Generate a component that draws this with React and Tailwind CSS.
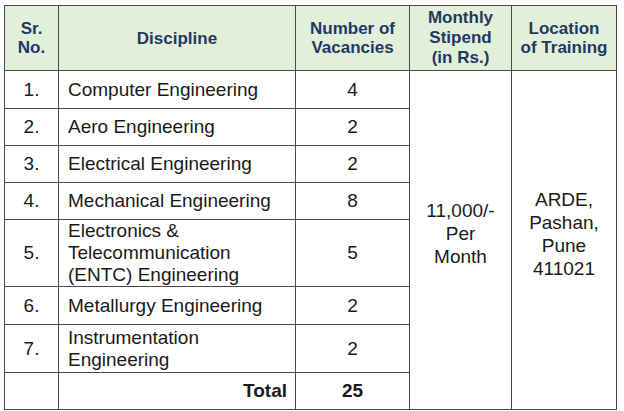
import React from "react";

const rows = [
  { sr: "1.", name: "Computer Engineering", n: "4", h: "h-[38px]" },
  { sr: "2.", name: "Aero Engineering", n: "2", h: "h-[37px]" },
  { sr: "3.", name: "Electrical Engineering", n: "2", h: "h-[37px]" },
  { sr: "4.", name: "Mechanical Engineering", n: "8", h: "h-[37px]" },
  { sr: "5.", name: "Electronics & Telecommunication (ENTC) Engineering", n: "5", h: "h-[66px]" },
  { sr: "6.", name: "Metallurgy Engineering", n: "2", h: "h-[38px]" },
  { sr: "7.", name: "Instrumentation Engineering", n: "2", h: "h-[48px]" },
];

const cell = "border border-[#4a4a4a] p-0";

const App = () => {
  return (
    <div className="w-[624px] h-[411px] bg-white pt-[5px] pl-[4px] font-['Liberation_Sans',Arial,sans-serif]">
      <table className="table-fixed border-collapse w-[612px] text-[19px] leading-[22px] text-[#1a1a1a]">
        <colgroup>
          <col className="w-[54px]" />
          <col className="w-[237px]" />
          <col className="w-[114px]" />
          <col className="w-[102px]" />
          <col className="w-[105px]" />
        </colgroup>
        <thead>
          <tr className="h-[65px] bg-[#e2efd9] text-[#1f3864] font-bold text-[17px] leading-[19px]">
            <th className={cell + " text-center"}>
              Sr.
              <br />
              No.
            </th>
            <th className={cell + " text-center"}>Discipline</th>
            <th className={cell + " text-center"}>
              Number of
              <br />
              Vacancies
            </th>
            <th className={cell + " text-center leading-[20px]"}>
              Monthly
              <br />
              Stipend
              <br />
              (in Rs.)
            </th>
            <th className={cell + " text-center"}>
              Location
              <br />
              of Training
            </th>
          </tr>
        </thead>
        <tbody>
          {rows.map((r, i) => (
            <tr key={r.sr} className={r.h}>
              <td className={cell + " text-center"}>{r.sr}</td>
              <td className={cell + " pl-[9px] pr-[20px]"}>{r.name}</td>
              <td className={cell + " text-center"}>{r.n}</td>
              {i === 0 && (
                <>
                  <td rowSpan={8} className={cell + " text-center align-middle leading-[23px] pb-[13px]"}>
                    11,000/-
                    <br />
                    Per
                    <br />
                    Month
                  </td>
                  <td rowSpan={8} className={cell + " text-center align-middle leading-[23px] pb-[13px]"}>
                    ARDE,
                    <br />
                    Pashan,
                    <br />
                    Pune
                    <br />
                    411021
                  </td>
                </>
              )}
            </tr>
          ))}
          <tr className="h-[37px] font-bold">
            <td className={cell}></td>
            <td className={cell + " text-right pr-[8px]"}>Total</td>
            <td className={cell + " text-center"}>25</td>
          </tr>
        </tbody>
      </table>
    </div>
  );
};

export default App;
